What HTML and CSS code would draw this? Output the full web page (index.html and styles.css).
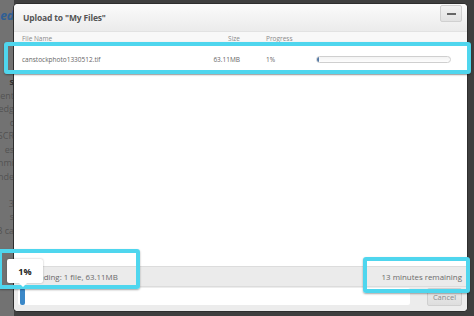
FILE: index.html
```html
<!DOCTYPE html>
<html>
<head>
<meta charset="utf-8">
<link rel="stylesheet" href="styles.css">
</head>
<body>
<div class="page">
  <span class="logo">ed</span>
  <span class="gap"></span>
  <span class="b">s</span>
  <span>ment</span>
  <span>ledg</span>
  <span>c</span>
  <span>SCR</span>
  <span>es</span>
  <span>mmi</span>
  <span>ende</span>
  <span>&nbsp;</span>
  <span>3</span>
  <span>s</span>
  <span>8 ca</span>
</div>

<div class="modal">
  <div class="head">
    <div class="title">Upload to "My Files"</div>
    <button class="min" aria-label="Minimize"><span class="dash"></span></button>
  </div>
  <div class="grid cols">
    <div>File Name</div>
    <div class="size">Size</div>
    <div class="prog">Progress</div>
    <div></div>
  </div>
  <div class="grid row">
    <div>canstockphoto1330512.tif</div>
    <div class="size">63.11MB</div>
    <div class="prog">1%</div>
    <div class="bar"><div class="fill" style="width:1%"></div></div>
  </div>
  <div class="body"></div>
  <div class="status">
    <span>Uploading: 1 file, 63.11MB</span>
    <span>13 minutes remaining</span>
  </div>
  <div class="foot">
    <div class="total"><div class="total-fill"></div></div>
    <button class="cancel">Cancel</button>
  </div>
</div>

<div class="hl hl-row"></div>
<div class="hl hl-left"></div>
<div class="hl hl-right"></div>

<div class="tip">1%</div>
</body>
</html>
```

FILE: styles.css
```css
html, body {
  margin: 0;
  padding: 0;
}
body {
  width: 474px;
  height: 316px;
  position: relative;
  overflow: hidden;
  background: #3f3f3f;
  font-family: "Open Sans", "DejaVu Sans", sans-serif;
}

.page {
  position: absolute;
  left: 0;
  top: 0;
  bottom: 0;
  width: 14px;
  background: #727272;
  overflow: hidden;
  display: flex;
  flex-direction: column;
  align-items: flex-end;
  padding-top: 9px;
  font-size: 9px;
  line-height: 13.5px;
  color: #535353;
  white-space: nowrap;
}
.page .logo {
  color: #2f5f95;
  font-weight: bold;
  font-style: italic;
  font-size: 12px;
  line-height: 14px;
}
.page .gap {
  height: 52px;
}
.page .b {
  font-weight: bold;
  color: #333;
}

.modal {
  position: absolute;
  left: 14px;
  top: 4px;
  width: 453px;
  height: 307px;
  background: #fff;
  border-radius: 4px;
  overflow: hidden;
  display: flex;
  flex-direction: column;
  box-shadow: 0 0 0 1px #2e2e2e;
}

.head {
  height: 28px;
  box-sizing: border-box;
  background: linear-gradient(#fbfbfb, #ebebeb);
  border-bottom: 1px solid #e2e2e2;
  display: flex;
  justify-content: space-between;
  align-items: center;
  padding: 0 5px 0 9px;
}
.title {
  font-size: 8.5px;
  font-weight: bold;
  color: #555;
  letter-spacing: -0.15px;
}
.min {
  align-self: flex-start;
  margin-top: 1px;
  width: 22px;
  height: 17px;
  padding: 0;
  border: 1px solid #d0d0d0;
  border-radius: 2px;
  background: linear-gradient(#f2f2f2, #e2e2e2);
  display: flex;
  align-items: center;
  justify-content: center;
}
.dash {
  width: 9px;
  height: 2px;
  background: #666;
}

.grid {
  display: grid;
  grid-template-columns: 1fr 60px 76px 135px;
  align-items: center;
  padding: 0 16px 0 8px;
}
.grid .size {
  text-align: right;
}
.grid .prog {
  padding-left: 26px;
}
.cols {
  height: 12px;
  background: #f8f8f8;
  font-size: 6.5px;
  color: #8a8a8a;
}
.row {
  height: 31px;
  box-sizing: border-box;
  border-top: 1px solid #e4e4e4;
  border-bottom: 1px solid #e4e4e4;
  font-size: 6.5px;
  color: #666;
}
.bar {
  height: 7px;
  box-sizing: border-box;
  border: 1px solid #cfcfcf;
  border-radius: 4px;
  background: linear-gradient(#f3f3f3, #fdfdfd);
  overflow: hidden;
}
.fill {
  min-width: 2px;
  height: 100%;
  background: #557aa6;
}

.body {
  flex: 1;
}

.status {
  height: 21px;
  box-sizing: border-box;
  background: #ebebeb;
  border-top: 1px solid #dcdcdc;
  border-bottom: 1px solid #dcdcdc;
  display: flex;
  justify-content: space-between;
  align-items: center;
  padding: 0 5px 0 8px;
  font-size: 7.9px;
  color: #6a6a6a;
}
.foot {
  height: 24px;
  box-sizing: border-box;
  background: #ececec;
  display: flex;
  align-items: flex-start;
  padding: 1px 5px 0 4px;
}
.total {
  flex: 1;
  height: 17px;
  background: #fff;
  border-radius: 2px;
  padding: 0 0 0 2px;
  display: flex;
}
.total-fill {
  width: 5px;
  height: 100%;
  background: #3b88c8;
  border-radius: 2px;
}
.cancel {
  margin-left: 17px;
  width: 35px;
  height: 18px;
  padding: 0;
  border: 1px solid #cfcfcf;
  border-radius: 2px;
  background: linear-gradient(#ececec, #dedede);
  font-family: inherit;
  font-size: 7.5px;
  color: #8a8a8a;
}

.hl {
  position: absolute;
  box-sizing: border-box;
  border: 4px solid #4fd6ee;
  border-radius: 3px;
  box-shadow: 0 1px 2px rgba(0, 0, 0, 0.35);
}
.hl-row {
  left: 4px;
  top: 42px;
  width: 467px;
  height: 32px;
}
.hl-left {
  left: -2px;
  top: 249px;
  width: 142px;
  height: 40px;
}
.hl-right {
  left: 363px;
  top: 257px;
  width: 107px;
  height: 36px;
}

.tip {
  position: absolute;
  left: 7px;
  top: 259px;
  width: 36px;
  height: 24px;
  background: #fff;
  border-radius: 2px;
  box-shadow: 0 0 2px rgba(0, 0, 0, 0.3);
  display: flex;
  align-items: center;
  justify-content: center;
  font-size: 9px;
  font-weight: bold;
  color: #222;
}
.tip::after {
  content: "";
  position: absolute;
  left: 12px;
  bottom: -4px;
  border-left: 4px solid transparent;
  border-right: 4px solid transparent;
  border-top: 4px solid #fff;
}
```
